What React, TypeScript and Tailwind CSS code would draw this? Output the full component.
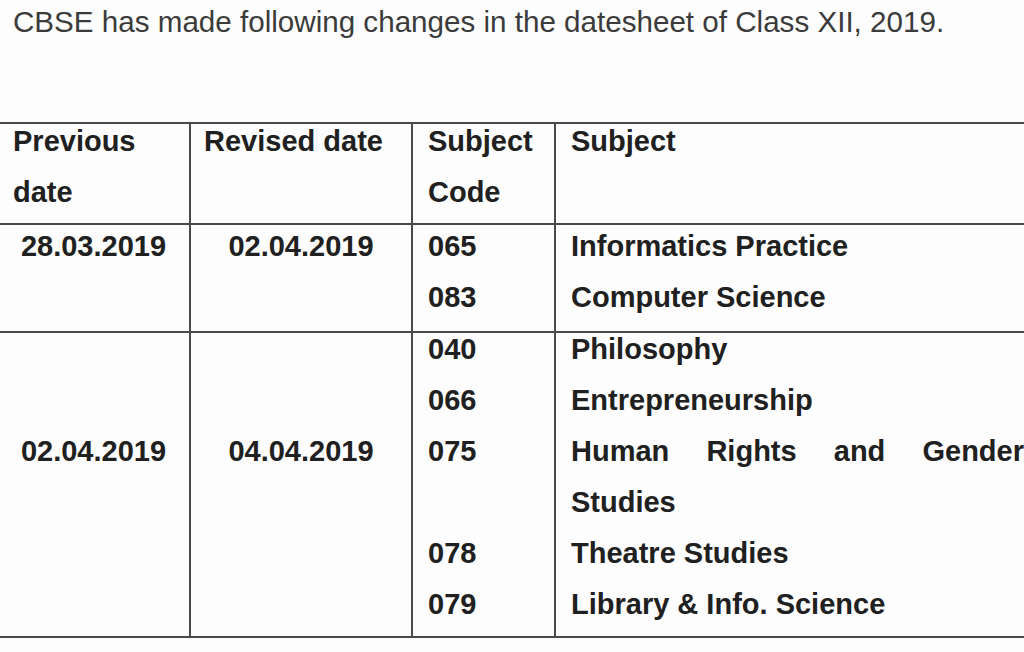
const changes = [
    {
        previous: '28.03.2019',
        revised: '02.04.2019',
        offset: '-mt-[4px]',
        dateLine: 0,
        rows: [
            { code: '065', subject: 'Informatics Practice' },
            { code: '083', subject: 'Computer Science' },
        ],
        height: 'h-[108px]',
    },
    {
        previous: '02.04.2019',
        revised: '04.04.2019',
        offset: '-mt-[9px]',
        dateLine: 2,
        rows: [
            { code: '040', subject: 'Philosophy' },
            { code: '066', subject: 'Entrepreneurship' },
            { code: '075', subject: 'Human Rights and Gender Studies', lines: 2 },
            { code: '078', subject: 'Theatre Studies' },
            { code: '079', subject: 'Library & Info. Science' },
        ],
        height: 'h-[305px]',
    },
];

export default function App() {
    return (
        <div className="h-[652px] w-[1024px] overflow-hidden bg-[#fdfdfd] font-['Liberation_Sans',Arial,sans-serif]">
            <p className="pl-[13px] pt-[5px] text-[29.6px] leading-[34px] text-[#3b3b3b]">
                CBSE has made following changes in the datesheet of Class XII, 2019.
            </p>

            <table className="-ml-[2px] mt-[83px] w-[1042px] table-fixed border-collapse text-[29px] leading-[51px] font-bold text-[#202020]">
                <colgroup>
                    <col className="w-[192px]" />
                    <col className="w-[222px]" />
                    <col className="w-[143px]" />
                    <col className="w-[485px]" />
                </colgroup>
                <thead>
                    <tr className="h-[101px]">
                        <th className="border-2 border-l-0 border-[#4a4a4a] p-0 pl-[15px] text-left align-top font-bold">
                            <div className="-mt-[8px]">
                                Previous
                                <br />
                                date
                            </div>
                        </th>
                        <th className="border-2 border-[#4a4a4a] p-0 pl-[13px] text-left align-top font-bold">
                            <div className="-mt-[8px]">Revised date</div>
                        </th>
                        <th className="border-2 border-[#4a4a4a] p-0 pl-[15px] text-left align-top font-bold">
                            <div className="-mt-[8px]">
                                Subject
                                <br />
                                Code
                            </div>
                        </th>
                        <th className="border-2 border-r-0 border-[#4a4a4a] p-0 pl-[15px] text-left align-top font-bold">
                            <div className="-mt-[8px]">Subject</div>
                        </th>
                    </tr>
                </thead>
                <tbody>
                    {changes.map((group) => (
                        <tr key={group.previous + group.revised} className={group.height}>
                            <td className="border-2 border-l-0 border-[#4a4a4a] p-0 text-center align-top">
                                <div className={group.offset}>
                                    {group.dateLine === 2 && (
                                        <>
                                            <div>&nbsp;</div>
                                            <div>&nbsp;</div>
                                        </>
                                    )}
                                    <div>{group.previous}</div>
                                </div>
                            </td>
                            <td className="border-2 border-[#4a4a4a] p-0 text-center align-top">
                                <div className={group.offset}>
                                    {group.dateLine === 2 && (
                                        <>
                                            <div>&nbsp;</div>
                                            <div>&nbsp;</div>
                                        </>
                                    )}
                                    <div>{group.revised}</div>
                                </div>
                            </td>
                            <td className="border-2 border-[#4a4a4a] p-0 pl-[15px] align-top">
                                <div className={group.offset}>
                                    {group.rows.map((row) => (
                                        <div key={row.code} className={row.lines === 2 ? 'h-[102px]' : ''}>
                                            {row.code}
                                        </div>
                                    ))}
                                </div>
                            </td>
                            <td className="border-2 border-r-0 border-[#4a4a4a] p-0 pl-[15px] pr-[16px] align-top">
                                <div className={group.offset}>
                                    {group.rows.map((row) => (
                                        <div key={row.code} className="text-justify">
                                            {row.subject}
                                        </div>
                                    ))}
                                </div>
                            </td>
                        </tr>
                    ))}
                </tbody>
            </table>
        </div>
    );
}
